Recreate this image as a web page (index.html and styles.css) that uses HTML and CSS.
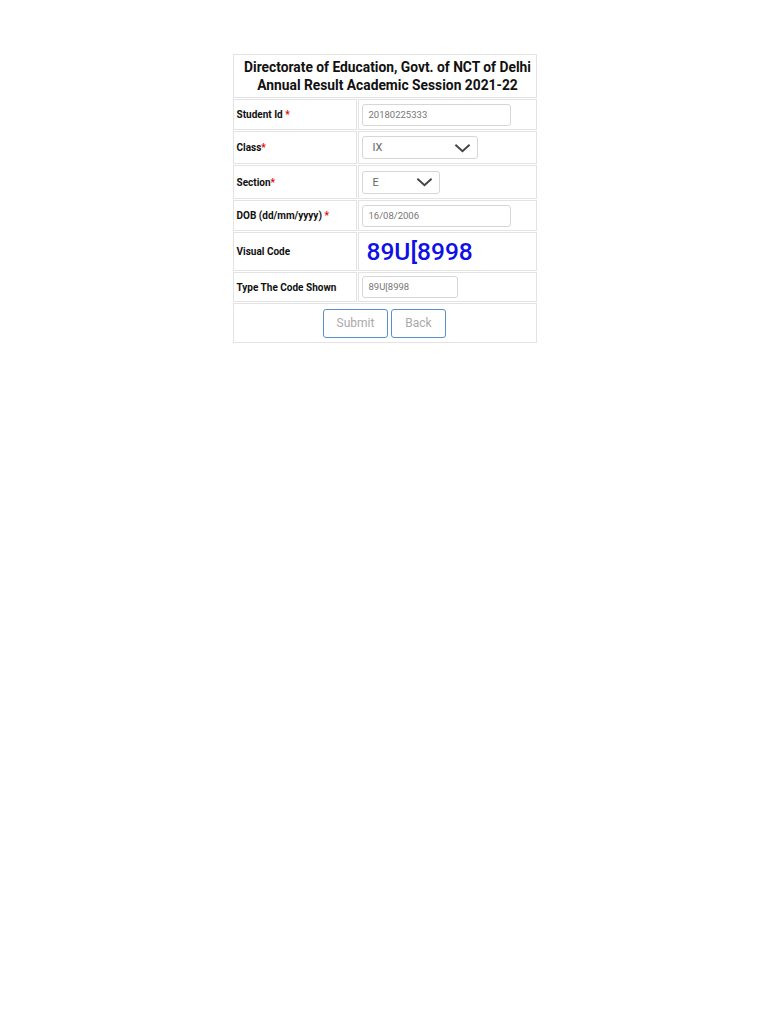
FILE: index.html
```html
<!DOCTYPE html>
<html>
<head>
<meta charset="utf-8">
<link rel="stylesheet" href="styles.css">
</head>
<body>
<div class="page">
<table class="form">
  <tr><th colspan="2" class="title">Directorate of Education, Govt. of NCT of Delhi<br>Annual Result Academic Session 2021-22</th></tr>
  <tr class="r1"><td class="lbl">Student Id <span class="req">*</span></td><td class="val"><div class="input w149">20180225333</div></td></tr>
  <tr class="r2"><td class="lbl">Class<span class="req">*</span></td><td class="val"><div class="select w116"><span>IX</span><svg class="chev" viewBox="0 0 18 10"><path d="M1.5 1.5 L9 8.5 L16.5 1.5" fill="none" stroke="#444" stroke-width="2"/></svg></div></td></tr>
  <tr class="r3"><td class="lbl">Section<span class="req">*</span></td><td class="val"><div class="select w78"><span>E</span><svg class="chev" viewBox="0 0 18 10"><path d="M1.5 1.5 L9 8.5 L16.5 1.5" fill="none" stroke="#444" stroke-width="2"/></svg></div></td></tr>
  <tr class="r4"><td class="lbl">DOB (dd/mm/yyyy) <span class="req">*</span></td><td class="val"><div class="input w149">16/08/2006</div></td></tr>
  <tr class="r5"><td class="lbl">Visual Code</td><td class="val"><span class="code">89U[8998</span></td></tr>
  <tr class="r6"><td class="lbl">Type The Code Shown</td><td class="val"><div class="input w96">89U[8998</div></td></tr>
  <tr class="r7"><td colspan="2" class="btns"><span class="btn bsub">Submit</span><span class="btn bback">Back</span></td></tr>
</table>
</div>
</body>
</html>
```
FILE: styles.css
```css
html, body { margin: 0; padding: 0; background: #fff; }
body { font-family: Roboto, "Noto Sans", sans-serif; color: #111; }
.page { display: flex; justify-content: center; padding-top: 53px; padding-left: 1px; }
.form { border-collapse: separate; border-spacing: 1px; width: 306px; }
.form th, .form td { border: 1px solid #e3e3e3; padding: 0; }
.title { height: 42px; font-size: 13.8px; font-weight: bold; line-height: 18px; text-align: center; color: #111; padding-left: 6px !important; }
.lbl { width: 119px; font-size: 10px; font-weight: bold; padding-left: 3px !important; color: #111; }
.req { color: #e00; }
.val { padding-left: 3px !important; }
.r1 td { height: 29px; }
.r2 td { height: 31px; }
.r3 td { height: 32px; }
.r4 td { height: 29px; }
.r5 td { height: 37px; }
.r6 td { height: 28px; }
.r7 td { height: 38px; }
.input { box-sizing: border-box; height: 22px; border: 1px solid #d6d6d6; border-radius: 3px; font-size: 9.5px; color: #777; padding-left: 6px; line-height: 19px; }
.w149 { width: 149px; }
.w96 { width: 96px; }
.select { box-sizing: border-box; height: 23px; border: 1px solid #d6d6d6; border-radius: 3px; display: flex; align-items: center; justify-content: space-between; padding: 0 6px 0 10px; font-size: 11px; color: #666; }
.w116 { width: 116px; }
.w78 { width: 78px; }
.chev { width: 17px; height: 10px; }
.code { font-size: 24.5px; color: #0f0fe8; padding-left: 5px; font-weight: 500; }
.btns { text-align: center; }
.btn { display: inline-block; box-sizing: border-box; height: 29px; line-height: 27px; border: 1px solid #5b8fcb; border-radius: 3px; font-size: 12px; color: #aaa; vertical-align: middle; }
.bsub { width: 65px; }
.bback { width: 55px; margin-left: 3px; }
```
